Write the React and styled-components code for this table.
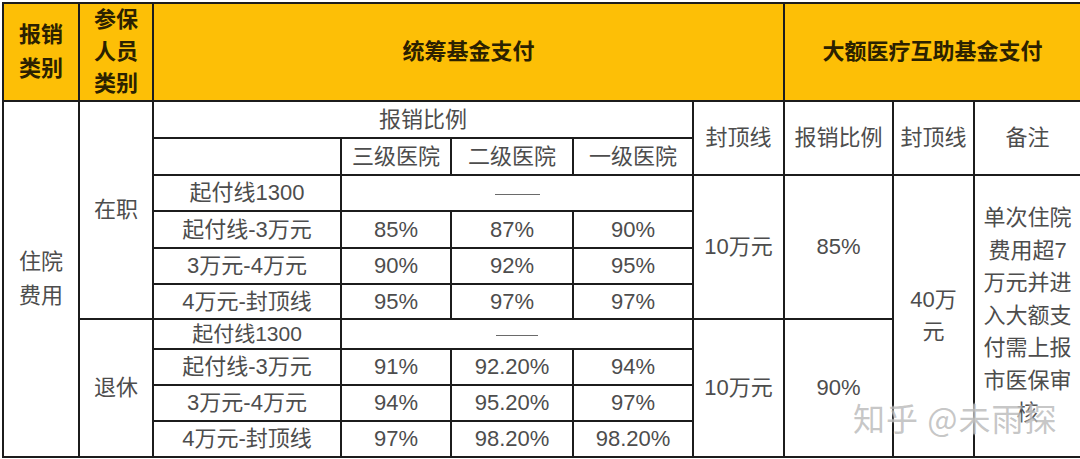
import React from 'react';
import styled, { createGlobalStyle } from 'styled-components';

const GlobalStyle = createGlobalStyle`
  html, body {
    margin: 0;
    padding: 0;
    background: #ffffff;
  }
  body {
    width: 1080px;
    height: 459px;
    overflow: hidden;
    font-family: "Liberation Sans", "Noto Sans CJK SC", sans-serif;
  }
`;

const Sheet = styled.div`
  position: relative;
  padding: 2px 0 0 2px;
  width: 1078px;
`;

const Table = styled.table`
  width: 1078px;
  table-layout: fixed;
  border-collapse: collapse;
  border: 2px solid #1c1c1c;
  font-size: 22px;
  color: #4d4d4d;
`;

const Row = styled.tr`
  height: ${(p) => p.$h}px;
`;

const HeadCell = styled.td`
  background: #fdbf06;
  color: #2b2100;
  font-weight: 700;
  text-align: center;
  vertical-align: middle;
  border: 2px solid #1c1c1c;
  padding: 0;
  line-height: ${(p) => p.$lh || 32}px;
  padding-left: ${(p) => p.$shift || 0}px;
`;

const Cell = styled.td`
  text-align: center;
  vertical-align: middle;
  border: 2px solid #1c1c1c;
  padding: 0;
  white-space: nowrap;
  line-height: ${(p) => p.$lh || 26}px;
  font-size: ${(p) => p.$fs || 22}px;
`;

const Dash = styled.span`
  display: inline-block;
  width: ${(p) => p.$w}px;
  height: 1px;
  background: #6a6a6a;
  vertical-align: middle;
`;

const Watermark = styled.div`
  position: absolute;
  left: 853px;
  top: 394px;
  font-family: "Noto Sans CJK SC", sans-serif;
  font-size: 32px;
  letter-spacing: 1px;
  color: rgba(150, 150, 150, 0.55);
  text-shadow: 0 0 2px rgba(255, 255, 255, 0.9);
  pointer-events: none;
  white-space: nowrap;
`;

const colWidths = [76, 74, 188, 110, 122, 120, 91, 109, 81, 107];

const tiers = ['起付线-3万元', '3万元-4万元', '4万元-封顶线'];

const active = [
  ['85%', '87%', '90%'],
  ['90%', '92%', '95%'],
  ['95%', '97%', '97%'],
];

const retired = [
  ['91%', '92.20%', '94%'],
  ['94%', '95.20%', '97%'],
  ['97%', '98.20%', '98.20%'],
];

const noteLines = ['单次住院', '费用超7', '万元并进', '入大额支', '付需上报', '市医保审', '核'];

const lines = (arr) =>
  arr.map((t, i) => (
    <React.Fragment key={i}>
      {i > 0 && <br />}
      {t}
    </React.Fragment>
  ));

export default function App() {
  return (
    <Sheet>
      <GlobalStyle />
      <Table>
        <colgroup>
          {colWidths.map((w, i) => (
            <col key={i} style={{ width: w }} />
          ))}
        </colgroup>
        <tbody>
          <Row $h={96}>
            <HeadCell $lh={34}>{lines(['报销', '类别'])}</HeadCell>
            <HeadCell $lh={32}>{lines(['参保', '人员', '类别'])}</HeadCell>
            <HeadCell colSpan={5}>统筹基金支付</HeadCell>
            <HeadCell colSpan={3}>大额医疗互助基金支付</HeadCell>
          </Row>
          <Row $h={37}>
            <Cell rowSpan={10} $lh={34}>{lines(['住院', '费用'])}</Cell>
            <Cell rowSpan={6}>在职</Cell>
            <Cell colSpan={4}>报销比例</Cell>
            <Cell rowSpan={2}>封顶线</Cell>
            <Cell rowSpan={2}>报销比例</Cell>
            <Cell rowSpan={2}>封顶线</Cell>
            <Cell rowSpan={2}>备注</Cell>
          </Row>
          <Row $h={37}>
            <Cell />
            <Cell>三级医院</Cell>
            <Cell>二级医院</Cell>
            <Cell>一级医院</Cell>
          </Row>
          <Row $h={36}>
            <Cell>起付线1300</Cell>
            <Cell colSpan={3}><Dash $w={45} /></Cell>
            <Cell rowSpan={4}>10万元</Cell>
            <Cell rowSpan={4}>85%</Cell>
            <Cell rowSpan={8} $lh={32}>{lines(['40万', '元'])}</Cell>
            <Cell rowSpan={8} $lh={32.5}>{lines(noteLines)}</Cell>
          </Row>
          {active.map((vals, i) => (
            <Row key={i} $h={i === 0 ? 37 : i === 1 ? 36 : 35}>
              <Cell>{tiers[i]}</Cell>
              {vals.map((v, j) => (
                <Cell key={j}>{v}</Cell>
              ))}
            </Row>
          ))}
          <Row $h={30}>
            <Cell rowSpan={4}>退休</Cell>
            <Cell $fs={21}>起付线1300</Cell>
            <Cell colSpan={3}><Dash $w={42} /></Cell>
            <Cell rowSpan={4}>10万元</Cell>
            <Cell rowSpan={4}>90%</Cell>
          </Row>
          {retired.map((vals, i) => (
            <Row key={i} $h={36}>
              <Cell>{tiers[i]}</Cell>
              {vals.map((v, j) => (
                <Cell key={j}>{v}</Cell>
              ))}
            </Row>
          ))}
        </tbody>
      </Table>
      <Watermark>知乎 @未雨探</Watermark>
    </Sheet>
  );
}
